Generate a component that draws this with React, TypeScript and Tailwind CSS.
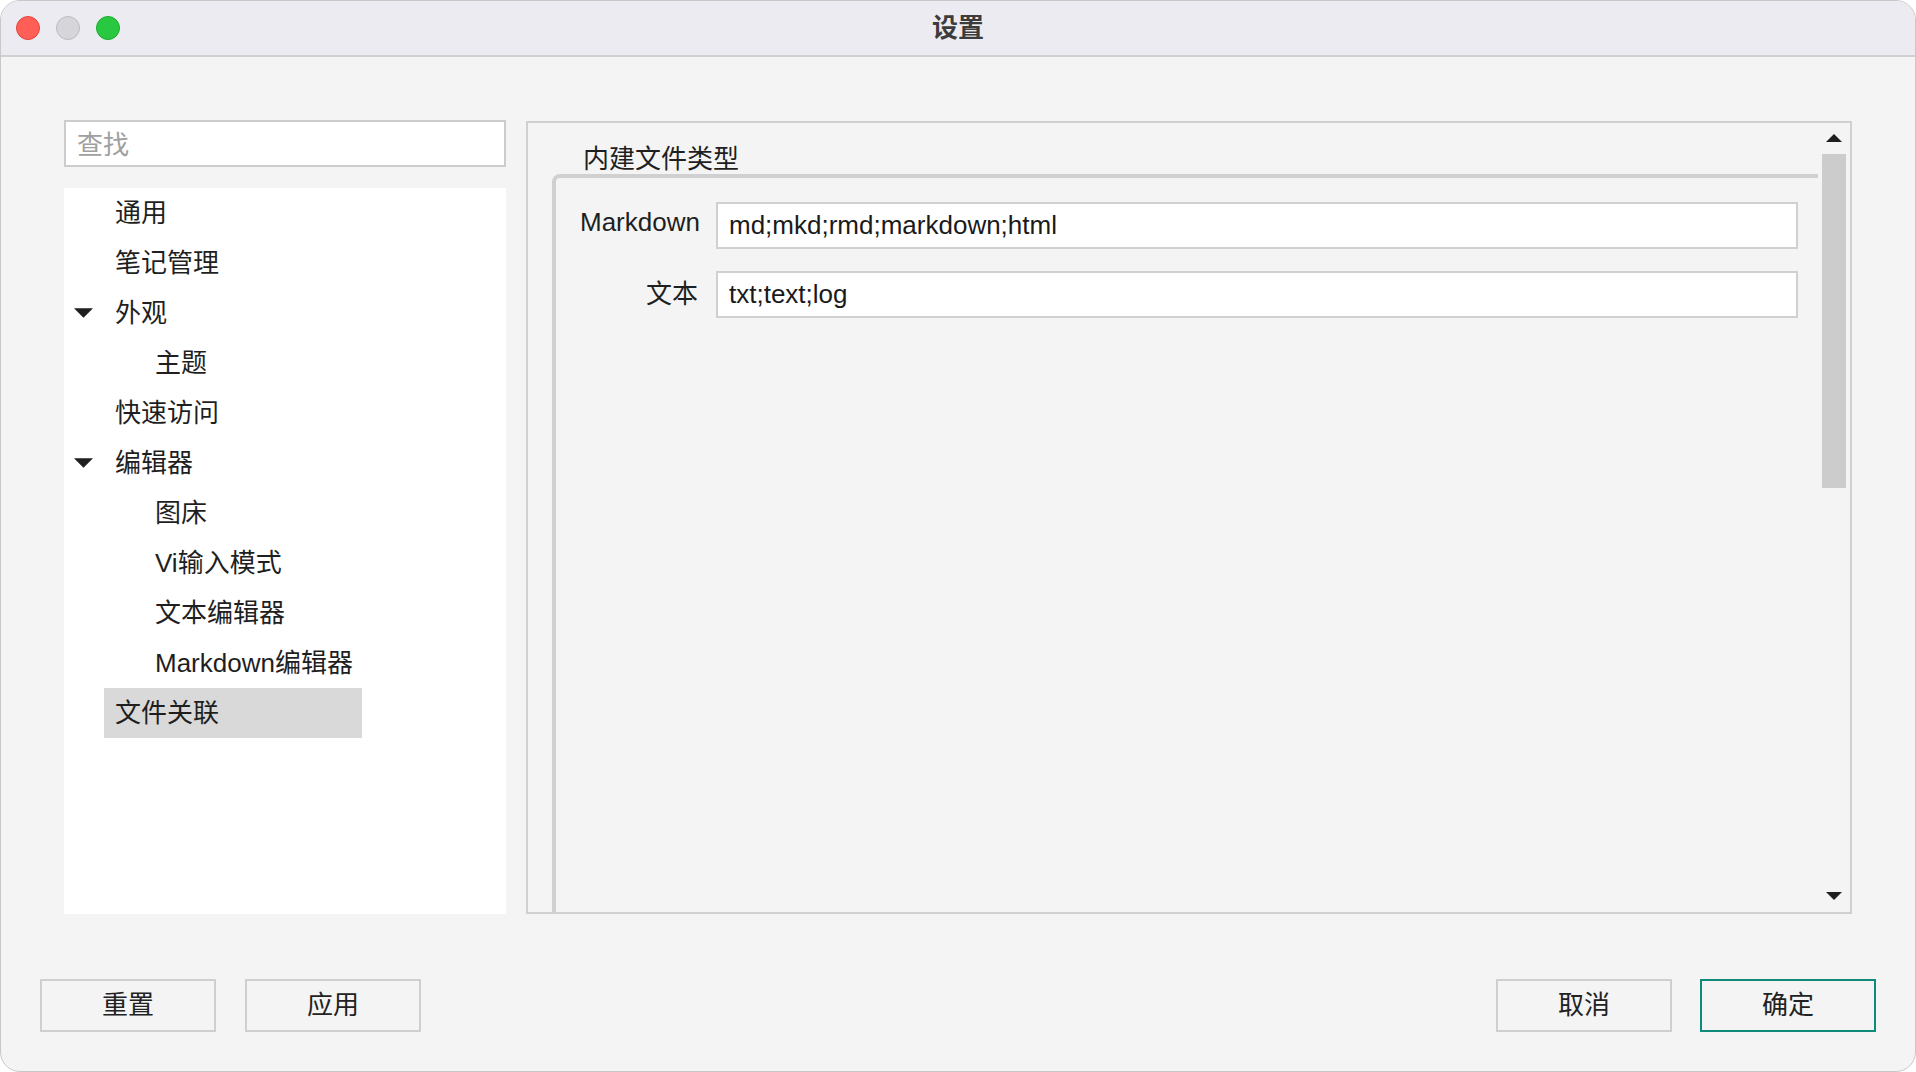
import React from "react";

interface TreeItem {
  label: string;
  level: number;
  expanded?: boolean;
  selected?: boolean;
}

const treeItems: TreeItem[] = [
  { label: "通用", level: 0 },
  { label: "笔记管理", level: 0 },
  { label: "外观", level: 0, expanded: true },
  { label: "主题", level: 1 },
  { label: "快速访问", level: 0 },
  { label: "编辑器", level: 0, expanded: true },
  { label: "图床", level: 1 },
  { label: "Vi输入模式", level: 1 },
  { label: "文本编辑器", level: 1 },
  { label: "Markdown编辑器", level: 1 },
  { label: "文件关联", level: 0, selected: true },
];

const fileTypes = [
  { name: "Markdown", suffixes: "md;mkd;rmd;markdown;html", latin: true },
  { name: "文本", suffixes: "txt;text;log", latin: false },
];

const font = {
  fontFamily: '"Liberation Sans", "Noto Sans CJK SC", sans-serif',
};

const Triangle = ({ up, className }: { up?: boolean; className: string }) => (
  <svg viewBox="0 0 20 10" className={className}>
    {up ? (
      <polygon points="0,10 20,10 10,0" fill="#1f1f1f" />
    ) : (
      <polygon points="0,0 20,0 10,10" fill="#1f1f1f" />
    )}
  </svg>
);

const DialogButton = ({
  label,
  primary,
}: {
  label: string;
  primary?: boolean;
}) => (
  <button
    className={
      "w-[176px] h-[53px] bg-[#f4f4f4] text-[26px] text-[#222222] border-2 " +
      (primary ? "border-[#0f8b7c]" : "border-[#cfcfcf]")
    }
  >
    {label}
  </button>
);

export default function App() {
  return (
    <div className="bg-white" style={font}>
      <div className="w-[1916px] h-[1072px] flex flex-col bg-[#f4f4f4] rounded-[20px] border border-[#c8c8c8] overflow-hidden">
        {/* 标题栏 */}
        <div className="relative h-[56px] shrink-0 flex items-center bg-[#ecebf1] border-b-2 border-[#d0d0d0]">
          <div className="flex items-center gap-[16px] pl-[15px]">
            <span className="w-[24px] h-[24px] rounded-full bg-[#ff5f57] border border-[#e2463f]" />
            <span className="w-[24px] h-[24px] rounded-full bg-[#d6d5da] border border-[#bcbbc0]" />
            <span className="w-[24px] h-[24px] rounded-full bg-[#28c840] border border-[#1aab29]" />
          </div>
          <div className="absolute inset-0 flex items-center justify-center pointer-events-none">
            <span className="text-[26px] font-bold text-[#3c3c3c]">设置</span>
          </div>
        </div>

        {/* 主体 */}
        <div className="flex gap-[20px] px-[63px] pt-[63px] h-[858px] shrink-0">
          <div className="w-[442px] flex flex-col gap-[21px]">
            <div className="h-[47px] bg-white border-2 border-[#cccccc] flex items-center pl-[11px] pt-[4px]">
              <span className="text-[26px] text-[#a0a0a0]">查找</span>
            </div>
            <div className="h-[726px] bg-white">
              {treeItems.map((item) => (
                <div key={item.label} className="flex h-[50px]">
                  <div className="w-[40px] flex items-center pl-[10px]">
                    {item.expanded && <Triangle className="w-[19px] h-[10px]" />}
                  </div>
                  <div
                    className={
                      "w-[258px] h-full flex items-center text-[26px] text-[#1f1f1f] " +
                      (item.level === 1 ? "pl-[51px] " : "pl-[11px] ") +
                      (item.selected ? "bg-[#d9d9d9]" : "")
                    }
                  >
                    {item.label}
                  </div>
                </div>
              ))}
            </div>
          </div>

          <div className="flex-1 mt-[1px] h-[793px] border-2 border-[#d0d0d0] flex">
            <div className="flex-1 overflow-hidden flex flex-col">
              <div className="ml-[55px] mt-[22px] h-[29px] leading-[29px] text-[26px] text-[#1f1f1f]">
                内建文件类型
              </div>
              <div className="ml-[24px] flex-1 border-l-4 border-t-4 border-[#d0d0d0] rounded-tl-[8px] pt-[24px] pl-[24px] pr-[20px] flex flex-col gap-[22px]">
                {fileTypes.map((type) => (
                  <div key={type.name} className="flex items-center gap-[18px]">
                    <div
                      className={
                        "w-[118px] text-right text-[26px] text-[#1f1f1f] " +
                        (type.latin ? "pb-[6px]" : "")
                      }
                    >
                      {type.name}
                    </div>
                    <div className="flex-1 h-[47px] bg-white border-2 border-[#d0d0d0] flex items-center pl-[11px]">
                      <span className="text-[26px] text-[#1a1a1a]">{type.suffixes}</span>
                    </div>
                  </div>
                ))}
              </div>
            </div>
            <div className="w-[32px] flex flex-col items-center pt-[11px] pb-[12px]">
              <Triangle up className="w-[16px] h-[8px]" />
              <div className="mt-[12px] w-[24px] h-[334px] bg-[#cccccc]" />
              <div className="flex-1" />
              <Triangle className="w-[16px] h-[8px]" />
            </div>
          </div>
        </div>

        {/* 底部按钮 */}
        <div className="flex items-center justify-between px-[39px] pt-[64px]">
          <div className="flex gap-[29px]">
            <DialogButton label="重置" />
            <DialogButton label="应用" />
          </div>
          <div className="flex gap-[28px]">
            <DialogButton label="取消" />
            <DialogButton label="确定" primary />
          </div>
        </div>
      </div>
    </div>
  );
}
